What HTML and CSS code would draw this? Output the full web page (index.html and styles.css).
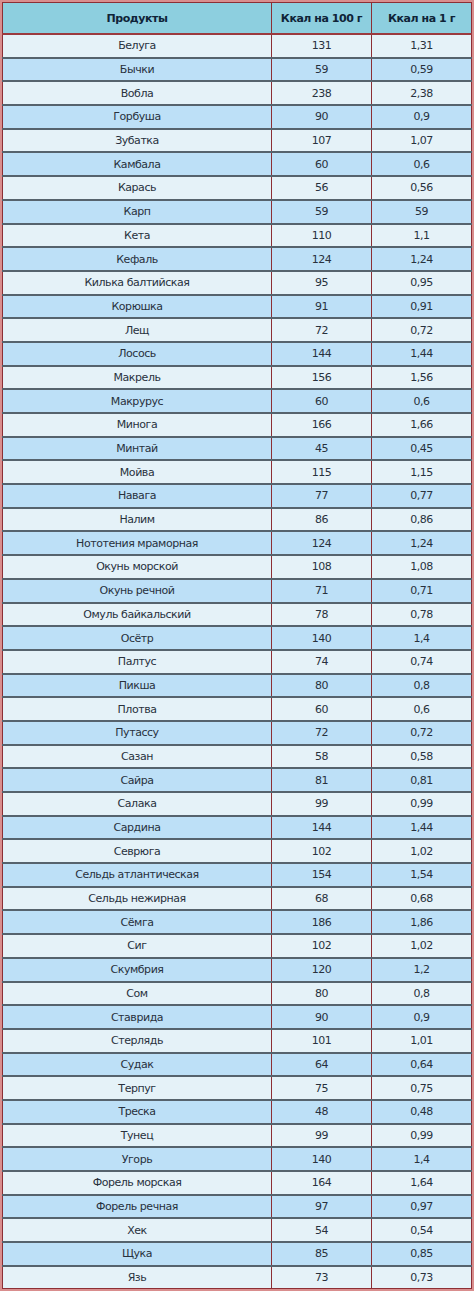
FILE: index.html
```html
<!DOCTYPE html>
<html lang="ru">
<head>
<meta charset="utf-8">
<title>Калорийность рыбы</title>
<link rel="stylesheet" href="styles.css">
</head>
<body>
<div class="frame">
<table class="kcal">
<thead>
<tr><th class="c-name">Продукты</th><th class="c-num">Ккал на 100 г</th><th class="c-num">Ккал на 1 г</th></tr>
</thead>
<tbody>
<tr><td>Белуга</td><td>131</td><td>1,31</td></tr>
<tr><td>Бычки</td><td>59</td><td>0,59</td></tr>
<tr><td>Вобла</td><td>238</td><td>2,38</td></tr>
<tr><td>Горбуша</td><td>90</td><td>0,9</td></tr>
<tr><td>Зубатка</td><td>107</td><td>1,07</td></tr>
<tr><td>Камбала</td><td>60</td><td>0,6</td></tr>
<tr><td>Карась</td><td>56</td><td>0,56</td></tr>
<tr><td>Карп</td><td>59</td><td>59</td></tr>
<tr><td>Кета</td><td>110</td><td>1,1</td></tr>
<tr><td>Кефаль</td><td>124</td><td>1,24</td></tr>
<tr><td>Килька балтийская</td><td>95</td><td>0,95</td></tr>
<tr><td>Корюшка</td><td>91</td><td>0,91</td></tr>
<tr><td>Лещ</td><td>72</td><td>0,72</td></tr>
<tr><td>Лосось</td><td>144</td><td>1,44</td></tr>
<tr><td>Макрель</td><td>156</td><td>1,56</td></tr>
<tr><td>Макрурус</td><td>60</td><td>0,6</td></tr>
<tr><td>Минога</td><td>166</td><td>1,66</td></tr>
<tr><td>Минтай</td><td>45</td><td>0,45</td></tr>
<tr><td>Мойва</td><td>115</td><td>1,15</td></tr>
<tr><td>Навага</td><td>77</td><td>0,77</td></tr>
<tr><td>Налим</td><td>86</td><td>0,86</td></tr>
<tr><td>Нототения мраморная</td><td>124</td><td>1,24</td></tr>
<tr><td>Окунь морской</td><td>108</td><td>1,08</td></tr>
<tr><td>Окунь речной</td><td>71</td><td>0,71</td></tr>
<tr><td>Омуль байкальский</td><td>78</td><td>0,78</td></tr>
<tr><td>Осётр</td><td>140</td><td>1,4</td></tr>
<tr><td>Палтус</td><td>74</td><td>0,74</td></tr>
<tr><td>Пикша</td><td>80</td><td>0,8</td></tr>
<tr><td>Плотва</td><td>60</td><td>0,6</td></tr>
<tr><td>Путассу</td><td>72</td><td>0,72</td></tr>
<tr><td>Сазан</td><td>58</td><td>0,58</td></tr>
<tr><td>Сайра</td><td>81</td><td>0,81</td></tr>
<tr><td>Салака</td><td>99</td><td>0,99</td></tr>
<tr><td>Сардина</td><td>144</td><td>1,44</td></tr>
<tr><td>Севрюга</td><td>102</td><td>1,02</td></tr>
<tr><td>Сельдь атлантическая</td><td>154</td><td>1,54</td></tr>
<tr><td>Сельдь нежирная</td><td>68</td><td>0,68</td></tr>
<tr><td>Сёмга</td><td>186</td><td>1,86</td></tr>
<tr><td>Сиг</td><td>102</td><td>1,02</td></tr>
<tr><td>Скумбрия</td><td>120</td><td>1,2</td></tr>
<tr><td>Сом</td><td>80</td><td>0,8</td></tr>
<tr><td>Ставрида</td><td>90</td><td>0,9</td></tr>
<tr><td>Стерлядь</td><td>101</td><td>1,01</td></tr>
<tr><td>Судак</td><td>64</td><td>0,64</td></tr>
<tr><td>Терпуг</td><td>75</td><td>0,75</td></tr>
<tr><td>Треска</td><td>48</td><td>0,48</td></tr>
<tr><td>Тунец</td><td>99</td><td>0,99</td></tr>
<tr><td>Угорь</td><td>140</td><td>1,4</td></tr>
<tr><td>Форель морская</td><td>164</td><td>1,64</td></tr>
<tr><td>Форель речная</td><td>97</td><td>0,97</td></tr>
<tr><td>Хек</td><td>54</td><td>0,54</td></tr>
<tr><td>Щука</td><td>85</td><td>0,85</td></tr>
<tr><td>Язь</td><td>73</td><td>0,73</td></tr>
</tbody>
</table>
</div>
</body>
</html>
```

FILE: styles.css
```css
html, body {
  margin: 0;
  padding: 0;
  background: #ffffff;
}

.frame {
  width: 474px;
  box-sizing: border-box;
  border: 2px solid #d98e8e;
}

.kcal {
  width: 100%;
  border-collapse: collapse;
  border: 1px solid #8c2f35;
  font-family: "DejaVu Sans", Verdana, sans-serif;
  font-size: 11px;
  letter-spacing: -0.45px;
  color: #28313d;
  table-layout: fixed;
}

.kcal th {
  background: #8dcfdf;
  color: #0f2438;
  font-weight: bold;
  height: 30px;
  padding: 0;
  text-align: center;
  border-left: 1px solid #8c2f35;
  border-right: 1px solid #8c2f35;
  border-bottom: 2px solid #9b3a3e;
}

.kcal .c-name {
  width: 268px;
}

.kcal .c-num {
  width: 99px;
}

.kcal td {
  height: 21.7px;
  padding: 0;
  text-align: center;
  border-left: 1px solid #8c2f35;
  border-right: 1px solid #8c2f35;
  border-bottom: 2px solid #56636d;
}

.kcal tbody tr:nth-child(odd) td {
  background: #e5f2f8;
}

.kcal tbody tr:nth-child(even) td {
  background: #bde0f7;
}

.kcal tbody tr:last-child td {
  border-bottom: 1px solid #8c2f35;
}
```
